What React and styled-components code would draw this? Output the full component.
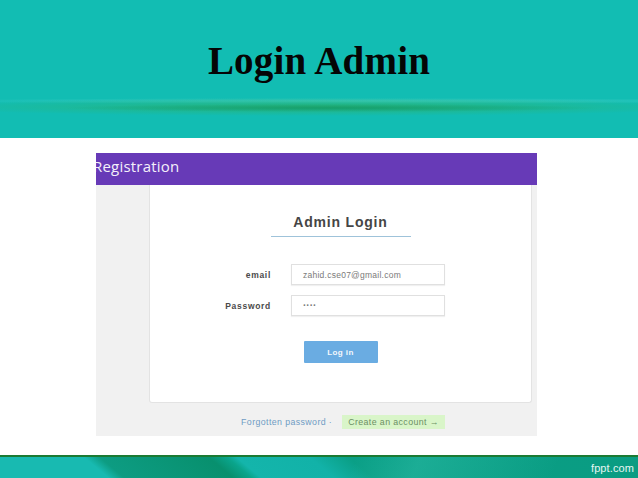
import React from "react";
import styled, { createGlobalStyle } from "styled-components";

const GlobalStyle = createGlobalStyle`
    html, body {
        margin: 0;
        padding: 0;
        background: #ffffff;
    }
`;

const Slide = styled.div`
    width: 638px;
    height: 478px;
    display: flex;
    flex-direction: column;
    overflow: hidden;
    background: #ffffff;
`;

// teal title band with the green glow line under the title
const Header = styled.header`
    height: 138px;
    flex-shrink: 0;
    display: flex;
    justify-content: center;
    background:
        radial-gradient(ellipse 42% 4px at 52% 108px, rgba(14, 150, 100, 0.7), rgba(14, 150, 100, 0) 100%),
        radial-gradient(ellipse 62% 9px at 50% 107px, rgba(45, 178, 110, 0.85), rgba(45, 178, 110, 0) 100%),
        radial-gradient(ellipse 70% 3px at 55% 101px, rgba(90, 215, 205, 0.55), rgba(90, 215, 205, 0) 100%),
        #12bdb3;
`;

const Title = styled.h1`
    margin: 38px 0 0;
    font-family: "Liberation Serif", "Times New Roman", serif;
    font-weight: 700;
    font-size: 39px;
    line-height: 46px;
    color: #050505;
    letter-spacing: 0.2px;
`;

const Body = styled.main`
    flex: 1;
    display: flex;
    flex-direction: column;
    padding: 15px 0 0 96px;
`;

const Shot = styled.div`
    width: 441px;
    height: 283px;
    display: flex;
    flex-direction: column;
    background: #f1f1f1;
`;

const TopBar = styled.div`
    height: 32px;
    flex-shrink: 0;
    overflow: hidden;
    background: #673ab7;
    display: flex;
    align-items: flex-start;
`;

const Brand = styled.span`
    margin: 3px 0 0 -3px;
    font-family: "Open Sans", "Noto Sans", sans-serif;
    font-size: 15px;
    color: #f4f0fa;
    letter-spacing: 0.2px;
`;

const Stage = styled.div`
    display: flex;
    flex-direction: column;
    padding: 0 5px 0 53px;
`;

const Card = styled.div`
    height: 218px;
    box-sizing: border-box;
    background: #ffffff;
    border: 1px solid #e3e3e3;
    border-top: none;
    border-radius: 0 0 3px 3px;
    display: flex;
    flex-direction: column;
    align-items: center;
`;

const CardTitle = styled.h2`
    margin: 29px 0 0;
    font-family: "Liberation Sans", Arial, sans-serif;
    font-weight: 700;
    font-size: 14px;
    letter-spacing: 0.8px;
    color: #454545;
    padding-bottom: 6px;
    width: 140px;
    text-align: center;
    border-bottom: 1px solid #9fc3da;
`;

const Form = styled.div`
    margin-top: 27px;
    display: grid;
    grid-template-columns: 121px 154px;
    column-gap: 20px;
    row-gap: 10px;
    align-self: flex-start;
`;

const Label = styled.label`
    font-family: "Liberation Sans", Arial, sans-serif;
    font-weight: 700;
    font-size: 8.5px;
    letter-spacing: 0.7px;
    color: #4a4a4a;
    text-align: right;
    align-self: center;
`;

const Field = styled.div`
    height: 21px;
    box-sizing: border-box;
    border: 1px solid #e0e0e0;
    box-shadow: 0 1px 1px rgba(0, 0, 0, 0.06);
    display: flex;
    align-items: center;
    padding-left: 11px;
    font-family: "Liberation Sans", Arial, sans-serif;
    font-size: ${(p) => (p.$secret ? "10px" : "8.5px")};
    font-weight: ${(p) => (p.$secret ? 700 : 400)};
    color: #7a7a7a;
    letter-spacing: ${(p) => (p.$secret ? "0px" : "0.25px")};
`;

const Button = styled.button`
    margin-top: 25px;
    width: 74px;
    height: 22px;
    border: none;
    border-radius: 1px;
    background: #6aace2;
    color: #f4f8fc;
    font-family: "Liberation Sans", Arial, sans-serif;
    font-weight: 700;
    font-size: 8px;
    letter-spacing: 0.4px;
    padding: 0;
`;

const Links = styled.div`
    margin-top: 12px;
    padding-left: 5px;
    display: flex;
    justify-content: center;
    align-items: center;
    gap: 10px;
    font-family: "Liberation Sans", Arial, sans-serif;
    font-size: 8.8px;
    letter-spacing: 0.4px;
`;

const LinkText = styled.span`
    color: ${(p) => (p.$green ? "#6b8f63" : "#6f9cc4")};
    background: ${(p) => (p.$green ? "#d9f5c9" : "transparent")};
    padding: ${(p) => (p.$green ? "2px 6px" : "0")};
`;

const Footer = styled.footer`
    height: 23px;
    flex-shrink: 0;
    box-sizing: border-box;
    border-top: 2px solid #1b7a33;
    display: flex;
    justify-content: flex-end;
    align-items: center;
    padding-right: 4px;
    background:
        linear-gradient(112deg, rgba(60, 200, 180, 0) 0 330px, rgba(60, 200, 180, 0.35) 390px, rgba(60, 200, 180, 0) 520px),
        linear-gradient(40deg, #18bab1 0 70px, #0d9c82 80px, #08906e 150px, #0aa58c 162px, #14b5ab 168px, #12b2a8 215px, #0a9f86 240px, #0a9c82 428px);
`;

const Credit = styled.span`
    font-family: "Liberation Sans", Arial, sans-serif;
    font-size: 11px;
    color: #e6f6f2;
    letter-spacing: 0.1px;
`;

function LoginScreenshot() {
    return (
        <Shot>
            <TopBar>
                <Brand>Registration</Brand>
            </TopBar>
            <Stage>
                <Card>
                    <CardTitle>Admin Login</CardTitle>
                    <Form>
                        <Label>email</Label>
                        <Field>zahid.cse07@gmail.com</Field>
                        <Label>Password</Label>
                        <Field $secret>····</Field>
                    </Form>
                    <Button>Log in</Button>
                </Card>
                <Links>
                    <LinkText>Forgotten password ·</LinkText>
                    <LinkText $green>Create an account →</LinkText>
                </Links>
            </Stage>
        </Shot>
    );
}

export default function App() {
    return (
        <Slide>
            <GlobalStyle />
            <Header>
                <Title>Login Admin</Title>
            </Header>
            <Body>
                <LoginScreenshot />
            </Body>
            <Footer>
                <Credit>fppt.com</Credit>
            </Footer>
        </Slide>
    );
}
